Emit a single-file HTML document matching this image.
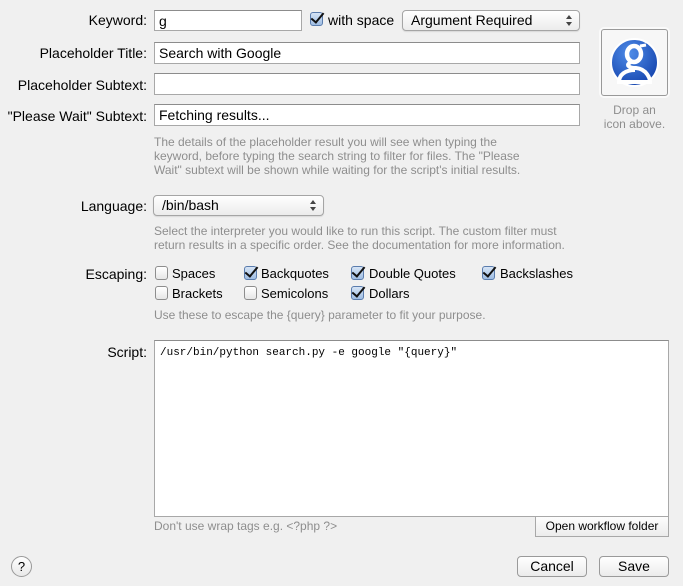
<!DOCTYPE html>
<html><head><meta charset="utf-8"><style>
*{box-sizing:border-box;margin:0;padding:0}
body{width:683px;height:586px;background:#f0f0f0;font-family:"Liberation Sans",sans-serif;font-size:13px;color:#000;position:relative;overflow:hidden}
.a{position:absolute;white-space:nowrap}
.lbl{position:absolute;text-align:right;right:536px;white-space:nowrap;font-size:14px}
.inp{position:absolute;background:#fff;border:1px solid #a8a8a8;border-top-color:#8c8c8c;padding:2px 4px;line-height:16px;font-size:14px}
.pop{position:absolute;background:linear-gradient(#fff,#ececec);border:1px solid #a5a5a5;border-radius:4px;padding:2px 8px;line-height:15px;box-shadow:0 1px 1px rgba(0,0,0,.1);font-size:14px}
.pop:after{content:"";position:absolute;right:7px;top:4px;width:0;height:0;border-left:3px solid transparent;border-right:3px solid transparent;border-bottom:4px solid #444}
.pop:before{content:"";position:absolute;right:7px;top:11px;width:0;height:0;border-left:3px solid transparent;border-right:3px solid transparent;border-top:4px solid #444}
.help{position:absolute;left:154px;color:#8e8e8e;font-size:12px;line-height:14px;white-space:nowrap}
.cb{position:absolute;width:13px;height:14px;border:1px solid #8d8d8d;border-radius:3px;background:linear-gradient(#fff,#e6e6e6)}
.cb.on{background:linear-gradient(#d6e4f5,#9fbde3);border-color:#5a7cad}
.cb.on:after{content:"";position:absolute;left:3px;top:-3px;width:5px;height:11px;border-right:2.5px solid #111;border-bottom:2.5px solid #111;transform:rotate(40deg)}
.btn{position:absolute;background:linear-gradient(#fff,#ebebeb);border:1px solid #9a9a9a;border-radius:4px;text-align:center;line-height:18px;font-size:14px}
</style></head><body>
<div class="lbl" style="top:12px">Keyword:</div>
<div class="inp" style="left:154px;top:10px;width:148px;height:21px">g</div>
<div class="cb on" style="left:310px;top:12px"></div>
<div class="a" style="left:328px;top:12px;font-size:14px">with space</div>
<div class="pop" style="left:402px;top:10px;width:178px;height:21px">Argument Required</div>

<div class="lbl" style="top:45px">Placeholder Title:</div>
<div class="inp" style="left:154px;top:42px;width:426px;height:22px">Search with Google</div>
<div class="lbl" style="top:77px">Placeholder Subtext:</div>
<div class="inp" style="left:154px;top:73px;width:426px;height:22px"></div>
<div class="lbl" style="top:108px">"Please Wait" Subtext:</div>
<div class="inp" style="left:154px;top:104px;width:426px;height:22px">Fetching results...</div>

<div class="a" style="left:601px;top:29px;width:67px;height:67px;border:1px solid #999;border-radius:3px;background:#f7f7f7;box-shadow:0 0 0 2px #fafafa"></div>
<svg class="a" style="left:609px;top:37px" width="51" height="51" viewBox="0 0 51 51">
<defs><radialGradient id="g" cx="40%" cy="30%" r="70%"><stop offset="0" stop-color="#4f8ce8"/><stop offset="1" stop-color="#1747b0"/></radialGradient></defs>
<circle cx="25.5" cy="25.5" r="23.5" fill="url(#g)" stroke="#fff" stroke-width="2"/>
<ellipse cx="25" cy="17" rx="7" ry="8" fill="none" stroke="#fff" stroke-width="4.5"/>
<path d="M31 9 L37 8" stroke="#fff" stroke-width="3"/>
<path d="M22 25 C16 28 20 31 27 31 C38 32 41 42 41 45 L10 45 C10 38 16 33 26 33" fill="none" stroke="#fff" stroke-width="4"/>
</svg>
<div class="a" style="left:596px;top:103px;width:77px;text-align:center;color:#8e8e8e;font-size:12px;line-height:14px">Drop an<br>icon above.</div>

<div class="help" style="top:135px">The details of the placeholder result you will see when typing the<br>keyword, before typing the search string to filter for files. The "Please<br>Wait" subtext will be shown while waiting for the script's initial results.</div>

<div class="lbl" style="top:198px">Language:</div>
<div class="pop" style="left:153px;top:195px;width:171px;height:21px">/bin/bash</div>
<div class="help" style="top:224px">Select the interpreter you would like to run this script. The custom filter must<br>return results in a specific order. See the documentation for more information.</div>

<div class="lbl" style="top:266px">Escaping:</div>
<div class="cb" style="left:155px;top:266px"></div><div class="a" style="left:172px;top:266px">Spaces</div>
<div class="cb on" style="left:244px;top:266px"></div><div class="a" style="left:261px;top:266px">Backquotes</div>
<div class="cb on" style="left:351px;top:266px"></div><div class="a" style="left:369px;top:266px">Double Quotes</div>
<div class="cb on" style="left:482px;top:266px"></div><div class="a" style="left:500px;top:266px">Backslashes</div>
<div class="cb" style="left:155px;top:286px"></div><div class="a" style="left:172px;top:286px">Brackets</div>
<div class="cb" style="left:244px;top:286px"></div><div class="a" style="left:261px;top:286px">Semicolons</div>
<div class="cb on" style="left:351px;top:286px"></div><div class="a" style="left:369px;top:286px">Dollars</div>
<div class="help" style="top:308px">Use these to escape the {query} parameter to fit your purpose.</div>

<div class="lbl" style="top:344px">Script:</div>
<div class="inp" style="left:154px;top:340px;width:515px;height:177px;font-family:'Liberation Mono',monospace;font-size:11px;padding:4px 5px">/usr/bin/python search.py -e google "{query}"</div>
<div class="help" style="top:519px">Don't use wrap tags e.g. &lt;?php ?&gt;</div>
<div class="a" style="left:535px;top:516px;width:134px;height:21px;border:1px solid #a8a8a8;background:linear-gradient(#fdfdfd,#ececec);font-size:12px;text-align:center;line-height:19px">Open workflow folder</div>

<div class="a" style="left:11px;top:556px;width:21px;height:21px;border:1px solid #999;border-radius:50%;background:linear-gradient(#fff,#e8e8e8);text-align:center;line-height:19px;font-size:13px">?</div>
<div class="btn" style="left:517px;top:556px;width:70px;height:21px">Cancel</div>
<div class="btn" style="left:599px;top:556px;width:70px;height:21px">Save</div>
</body></html>
